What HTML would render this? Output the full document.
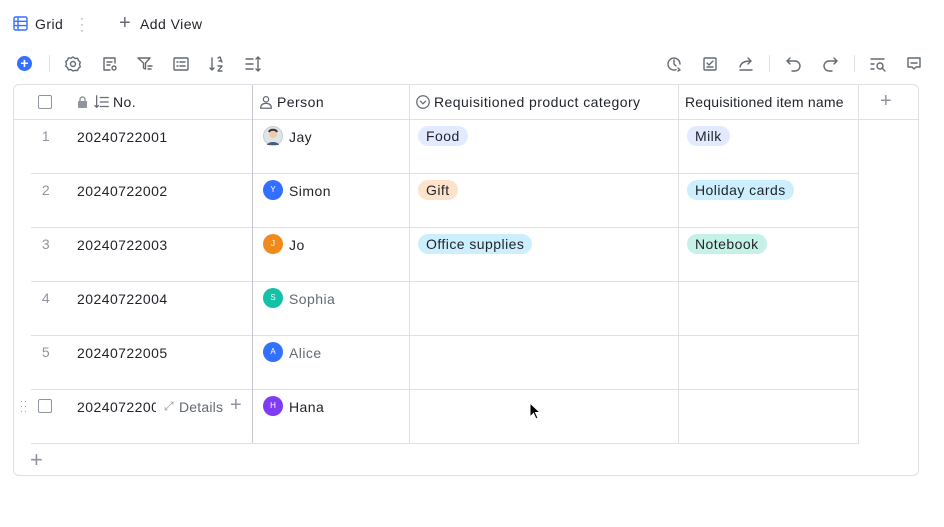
<!DOCTYPE html>
<html><head><meta charset="utf-8"><style>
*{box-sizing:border-box;margin:0;padding:0}
body{width:944px;height:527px;background:#fff;font-family:"Liberation Sans",sans-serif;color:#1f2329;position:relative;overflow:hidden;font-size:14px;letter-spacing:0.45px}
.a{position:absolute}
.ic{position:absolute;width:18px;height:18px}
.ic svg{width:18px;height:18px;fill:none;stroke:#646a73;stroke-width:1.4;stroke-linecap:round;stroke-linejoin:round}
.tag{position:absolute;height:20px;line-height:20px;padding:0 8px;border-radius:10px;font-size:14px;color:#1f2329}
.av{position:absolute;width:20px;height:20px;border-radius:50%;color:#fff;font-size:8px;text-align:center;line-height:20px;letter-spacing:0}
.hl{position:absolute;height:1px;background:#dee0e3}
.vl{position:absolute;width:1px;background:#dee0e3}
.num{position:absolute;color:#8f959e;font-size:14px;width:30px;text-align:center;left:31px}
.no{position:absolute;left:77px;font-size:14px}
.pn{position:absolute;left:289px;font-size:14px}
</style></head><body>
<svg class="a" style="left:13px;top:16px" width="15" height="15" viewBox="0 0 15 15"><rect x="1" y="1" width="13" height="13" rx="1.5" fill="none" stroke="#3370ff" stroke-width="1.4"/><path d="M1 5.3h13M1 9.6h13M5 1v13" stroke="#3370ff" stroke-width="1.4"/></svg>
<div class="a" style="left:35px;top:16px;font-size:14px">Grid</div>
<div class="a" style="left:80px;top:15px;color:#8f959e;font-size:12px;line-height:6px">·<br>·<br>·</div>
<div class="a" style="left:119px;top:12px;font-size:20px;color:#646a73;font-weight:300">+</div>
<div class="a" style="left:140px;top:16px;font-size:14px">Add View</div>
<div class="a" style="left:17px;top:56px;width:15px;height:15px;border-radius:50%;background:#3370ff;color:#fff;font-size:14px;line-height:14px;text-align:center;font-weight:bold;letter-spacing:0">+</div>
<div class="vl" style="left:49px;top:55px;height:17px"></div>
<div class="ic" style="left:64px;top:55px"><svg viewBox="0 0 18 18"><circle cx="9" cy="9" r="2.5"/><path d="M9 2l2 1.5 2.5-.3 1 2.3 1.8 1.7-.8 2.3.8 2.3-1.8 1.5-1 2.3-2.5-.3L9 16l-2-1.5-2.5.3-1-2.3L1.7 11l.8-2-.8-2.3 1.8-1.5 1-2.3 2.5.3z"/></svg></div>
<div class="ic" style="left:101px;top:55px"><svg viewBox="0 0 18 18"><path d="M14 8V3H3v12h6M6 7h5M6 10h3"/><circle cx="13" cy="13" r="2"/></svg></div>
<div class="ic" style="left:136px;top:55px"><svg viewBox="0 0 18 18"><path d="M2 3h12l-4.5 5v6l-2-1V8z M12 11h4M12 14h3"/></svg></div>
<div class="ic" style="left:172px;top:55px"><svg viewBox="0 0 18 18"><rect x="2" y="3" width="14" height="12" rx="1"/><path d="M5 7h1M8 7h5M5 11h1M8 11h5"/></svg></div>
<div class="ic" style="left:208px;top:55px"><svg viewBox="0 0 18 18"><path d="M4 3v12M2 13l2 2 2-2M10 3l2-1 2 5M11 6h2M10 11h4l-4 5h4"/></svg></div>
<div class="ic" style="left:244px;top:55px"><svg viewBox="0 0 18 18"><path d="M2 4h7M2 9h7M2 14h7M14 2v14M12 4l2-2 2 2M12 14l2 2 2-2"/></svg></div>
<div class="ic" style="left:665px;top:55px"><svg viewBox="0 0 18 18"><path d="M15 9a6 6 0 1 0-4 5.7M9 5v4l2 2M13 13l2 2-2 1"/></svg></div>
<div class="ic" style="left:701px;top:55px"><svg viewBox="0 0 18 18"><rect x="3" y="3" width="12" height="12" rx="1"/><path d="M6 8l2 2 4-4M6 12h6"/></svg></div>
<div class="ic" style="left:737px;top:55px"><svg viewBox="0 0 18 18"><path d="M3 15h12M3 12c1-4 4-6 10-6M11 3l3 3-3 3"/></svg></div>
<div class="vl" style="left:769px;top:55px;height:17px"></div>
<div class="ic" style="left:785px;top:55px"><svg viewBox="0 0 18 18"><path d="M5 3L2 6l3 3M2 6h8a5 5 0 0 1 0 10H7"/></svg></div>
<div class="ic" style="left:821px;top:55px"><svg viewBox="0 0 18 18"><path d="M13 3l3 3-3 3M16 6H8a5 5 0 0 0 0 10h3"/></svg></div>
<div class="vl" style="left:854px;top:55px;height:17px"></div>
<div class="ic" style="left:869px;top:55px"><svg viewBox="0 0 18 18"><path d="M2 4h13M2 9h3M2 14h3"/><circle cx="11" cy="11" r="3"/><path d="M13 13l3 3"/></svg></div>
<div class="ic" style="left:905px;top:55px"><svg viewBox="0 0 18 18"><path d="M3 3h12v9h-4l-2 2-2-2H3zM6 8h6"/></svg></div>
<div class="a" style="left:13px;top:84px;width:906px;height:392px;border:1px solid #dee0e3;border-radius:6px"></div>
<div class="hl" style="left:14px;top:119px;width:904px"></div>
<div class="hl" style="left:31px;top:173px;width:827px"></div>
<div class="hl" style="left:31px;top:227px;width:827px"></div>
<div class="hl" style="left:31px;top:281px;width:827px"></div>
<div class="hl" style="left:31px;top:335px;width:827px"></div>
<div class="hl" style="left:31px;top:389px;width:827px"></div>
<div class="hl" style="left:31px;top:443px;width:828px"></div>
<div class="vl" style="left:252px;top:85px;height:358px;background:#c5c8ce"></div>
<div class="vl" style="left:409px;top:85px;height:358px"></div>
<div class="vl" style="left:678px;top:85px;height:358px"></div>
<div class="vl" style="left:858px;top:85px;height:358px"></div>
<div class="a" style="left:38px;top:95px;width:14px;height:14px;border:1.5px solid #8f959e;border-radius:2px"></div>
<svg class="a" style="left:77px;top:96px" width="11" height="12" viewBox="0 0 11 12"><rect x="1" y="5" width="9" height="7" rx="1" fill="#8f959e"/><path d="M3 5V3.5a2.5 2.5 0 0 1 5 0V5" fill="none" stroke="#8f959e" stroke-width="1.4"/></svg>
<div class="ic" style="left:94px;top:94px;width:16px;height:16px"><svg viewBox="0 0 18 18" style="width:16px;height:16px"><path d="M3 2v13M1 13l2 2 2-2M7 4h9M7 9h9M7 14h9"/></svg></div>
<div class="a" style="left:113px;top:94px">No.</div>
<div class="ic" style="left:258px;top:94px;width:16px;height:16px"><svg viewBox="0 0 18 18" style="width:16px;height:16px"><circle cx="9" cy="6" r="3"/><path d="M3 16c0-4 2.5-5.5 6-5.5s6 1.5 6 5.5z"/></svg></div>
<div class="a" style="left:277px;top:94px">Person</div>
<div class="ic" style="left:415px;top:94px;width:16px;height:16px"><svg viewBox="0 0 18 18" style="width:16px;height:16px"><circle cx="9" cy="9" r="7"/><path d="M6 8l3 3 3-3"/></svg></div>
<div class="a" style="left:434px;top:94px">Requisitioned product category</div>
<div class="a" style="left:685px;top:94px;letter-spacing:0.2px">Requisitioned item name</div>
<div class="a" style="left:880px;top:90px;font-size:20px;color:#8f959e;font-weight:300">+</div>
<div class="num" style="top:128px">1</div><div class="no" style="top:129px">20240722001</div>
<div class="num" style="top:182px">2</div><div class="no" style="top:183px">20240722002</div>
<div class="num" style="top:236px">3</div><div class="no" style="top:237px">20240722003</div>
<div class="num" style="top:290px">4</div><div class="no" style="top:291px">20240722004</div>
<div class="num" style="top:344px">5</div><div class="no" style="top:345px">20240722005</div>
<div class="a" style="left:20px;top:399px;color:#8f959e;font-size:9px;line-height:5px;letter-spacing:1px">··<br>··<br>··</div>
<div class="a" style="left:38px;top:399px;width:14px;height:14px;border:1.5px solid #8f959e;border-radius:2px"></div>
<div class="no" style="top:399px;width:79px;overflow:hidden;white-space:nowrap">20240722006</div>
<div class="a" style="left:164px;top:399px;color:#8f959e;font-size:12px">⤢</div>
<div class="a" style="left:179px;top:399px;color:#646a73;font-size:14px;letter-spacing:0.2px">Details</div>
<div class="a" style="left:230px;top:394px;color:#8f959e;font-size:20px;font-weight:300">+</div>
<div class="av" style="left:263px;top:126px;background:#dfe3ea;border:1px solid #ccc"><svg width="18" height="18" viewBox="0 0 18 18"><circle cx="9" cy="7" r="4" fill="#f2c9a8"/><path d="M5 5c1-3 7-3 8 0" stroke="#333" stroke-width="2" fill="none"/><path d="M3 18c1-4 11-4 12 0" fill="#4a5b75"/></svg></div>
<div class="pn" style="top:129px">Jay</div>
<div class="av" style="left:263px;top:180px;background:#3370ff">Y</div><div class="pn" style="top:183px">Simon</div>
<div class="av" style="left:263px;top:234px;background:#f08a1c">J</div><div class="pn" style="top:237px">Jo</div>
<div class="av" style="left:263px;top:288px;background:#14c0a6">S</div><div class="pn" style="top:291px;color:#646a73">Sophia</div>
<div class="av" style="left:263px;top:342px;background:#3370ff">A</div><div class="pn" style="top:345px;color:#646a73">Alice</div>
<div class="av" style="left:263px;top:396px;background:#7f3bf5">H</div><div class="pn" style="top:399px">Hana</div>
<div class="tag" style="left:418px;top:126px;background:#e1eaff">Food</div>
<div class="tag" style="left:418px;top:180px;background:#fee3cb">Gift</div>
<div class="tag" style="left:418px;top:234px;background:#cdeefc">Office supplies</div>
<div class="tag" style="left:687px;top:126px;background:#e1eaff">Milk</div>
<div class="tag" style="left:687px;top:180px;background:#cdeefc">Holiday cards</div>
<div class="tag" style="left:687px;top:234px;background:#c6f1e6">Notebook</div>
<div class="a" style="left:30px;top:447px;font-size:22px;color:#8f959e;font-weight:300">+</div>
<svg class="a" style="left:529px;top:402px" width="12" height="18" viewBox="0 0 12 18"><path d="M1 1v14l3.5-3.5 2.5 5.5 2-1-2.5-5.5H11z" fill="#000" stroke="#fff" stroke-width="1"/></svg>
</body></html>
